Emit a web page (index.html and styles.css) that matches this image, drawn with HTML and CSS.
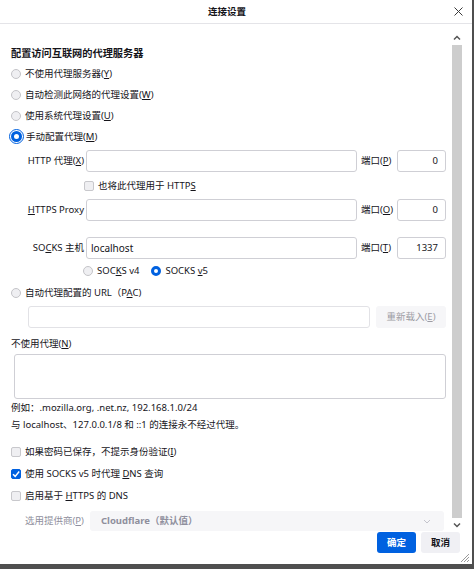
FILE: index.html
```html
<!DOCTYPE html>
<html lang="zh-CN">
<head>
<meta charset="utf-8">
<title>连接设置</title>
<link rel="stylesheet" href="styles.css">
</head>
<body>
<div class="window">
  <div class="titlebar">
    <span class="title">连接设置</span>
    <svg class="close" width="9" height="9" viewBox="0 0 9 9"><path d="M0.5 0.5L8.5 8.5M8.5 0.5L0.5 8.5" stroke="#3a3a3a" stroke-width="1"/></svg>
  </div>
  <div class="scrollarea">
    <div class="content">
      <div class="heading">配置访问互联网的代理服务器</div>
      <div class="radio-row"><span class="radio"></span><span>不使用代理服务器(<u>Y</u>)</span></div>
      <div class="radio-row"><span class="radio"></span><span>自动检测此网络的代理设置(<u>W</u>)</span></div>
      <div class="radio-row"><span class="radio"></span><span>使用系统代理设置(<u>U</u>)</span></div>
      <div class="radio-row"><span class="radio on focus"></span><span>手动配置代理(<u>M</u>)</span></div>

      <div class="proxy-row first">
        <span class="plabel">HTTP 代理(<u>X</u>)</span>
        <span class="input host"></span>
        <span class="portlabel">端口(<u>P</u>)</span>
        <span class="input port">0</span>
      </div>
      <div class="check-row indent"><span class="check"></span><span>也将此代理用于 HTTP<u>S</u></span></div>
      <div class="proxy-row">
        <span class="plabel"><u>H</u>TTPS Proxy</span>
        <span class="input host"></span>
        <span class="portlabel">端口(<u>O</u>)</span>
        <span class="input port">0</span>
      </div>
      <div class="proxy-row socks">
        <span class="plabel">SO<u>C</u>KS 主机</span>
        <span class="input host val">localhost</span>
        <span class="portlabel">端口(<u>T</u>)</span>
        <span class="input port">1337</span>
      </div>
      <div class="socks-row">
        <span class="radio"></span><span class="sv4">SOC<u>K</u>S v4</span>
        <span class="radio on"></span><span>SOCKS <u>v</u>5</span>
      </div>
      <div class="radio-row pac"><span class="radio"></span><span>自动代理配置的 URL（P<u>A</u>C)</span></div>
      <div class="pac-input-row">
        <span class="input pacurl"></span>
        <span class="btn-reload"><span>重新载入(<u>E</u>)</span></span>
      </div>
      <div class="text-line noproxy"><span>不使用代理(<u>N</u>)</span></div>
      <div class="textarea"></div>
      <div class="text-line ex">例如：.mozilla.org, .net.nz, 192.168.1.0/24</div>
      <div class="text-line ex">与 localhost、127.0.0.1/8 和 ::1 的连接永不经过代理。</div>
      <div class="check-row first-check"><span class="check"></span><span>如果密码已保存，不提示身份验证(<u>I</u>)</span></div>
      <div class="check-row"><span class="check on"><svg width="10" height="10" viewBox="0 0 10 10"><path d="M2 5.2L4.2 7.4L8.2 2.6" fill="none" stroke="#fff" stroke-width="1.5"/></svg></span><span>使用 SOCKS v5 时代理 <u>D</u>NS 查询</span></div>
      <div class="check-row"><span class="check"></span><span>启用基于 <u>H</u>TTPS 的 DNS</span></div>
      <div class="provider-row">
        <span class="plabel2">选用提供商(<u>P</u>)</span>
        <span class="select"><span>Cloudflare（默认值）</span><svg class="chev" width="8" height="5" viewBox="0 0 8 5"><path d="M1 1L4 4L7 1" fill="none" stroke="#c4c4cc" stroke-width="1"/></svg></span>
      </div>
    </div>
    <div class="scrollbar">
      <svg class="arrow" width="10" height="12" viewBox="0 0 10 12"><path d="M2 7.5L5 4.5L8 7.5" fill="none" stroke="#555" stroke-width="1.5"/></svg>
      <div class="thumb"></div>
      <svg class="arrow" width="10" height="12" viewBox="0 0 10 12"><path d="M2 4.5L5 7.5L8 4.5" fill="none" stroke="#555" stroke-width="1.5"/></svg>
    </div>
    <div class="gutter"></div>
  </div>
  <div class="footer">
    <span class="btn primary">确定</span>
    <span class="btn">取消</span>
    <svg class="grip" width="10" height="10" viewBox="0 0 10 10"><path d="M9 1L1 9M9 4L4 9M9 7L7 9" stroke="#9a9a9a" stroke-width="1"/></svg>
  </div>
</div>
</body>
</html>
```

FILE: styles.css
```css
* { box-sizing: border-box; }
body {
  margin: 0;
  background: #fff;
  font-family: "Noto Sans", "Noto Sans CJK SC", sans-serif;
  font-size: 9.5px;
  line-height: 1.2;
  color: #15141a;
}
u { text-decoration: underline; text-underline-offset: 1px; }

.window {
  width: 474px;
  height: 569px;
  display: flex;
  flex-direction: column;
  background: #fff;
  border-right: 2px solid #4f4f4f;
  border-bottom: 5px solid #4f4f4f;
}

.titlebar {
  height: 24px;
  flex: none;
  border-bottom: 1px solid #e4e4e8;
  display: flex;
  align-items: center;
  justify-content: center;
  padding-right: 18px;
  position: relative;
}
.title { font-weight: 700; font-size: 9.5px; }
.close { position: absolute; right: 9px; top: 7px; }

.scrollarea {
  height: 507px;
  flex: none;
  display: flex;
}
.content {
  width: 452px;
  flex: none;
  padding: 19px 6px 0 11px;
  overflow: hidden;
}
.scrollbar {
  width: 10px;
  flex: none;
  display: flex;
  flex-direction: column;
  padding-top: 8px;
}
.arrow { flex: none; display: block; }
.thumb { flex: 1; background: #cdcdcd; margin: 1px 0; }
.gutter { width: 10px; flex: none; }

.heading { height: 20px; display: flex; align-items: center; font-size: 10.2px; font-weight: 700; white-space: nowrap; }

.radio-row { height: 21px; display: flex; align-items: center; gap: 4px; white-space: nowrap; }
.radio {
  width: 10px; height: 10px; flex: none;
  border-radius: 50%;
  border: 1px solid #c4c4c8;
  background: #efeff2;
}
.radio.on { border: 3px solid #0061e0; background: #fff; }
.radio.focus { outline: 1px solid #0061e0; outline-offset: 1px; width: 11px; height: 11px; }

.proxy-row { height: 26px; display: flex; align-items: center; white-space: nowrap; }
.proxy-row.first { height: 28px; }
.proxy-row.socks { margin-top: 12px; }
.plabel { width: 75px; text-align: right; padding-right: 2px; flex: none; }
.input {
  height: 22px;
  border: 1px solid #cfcfd5;
  border-radius: 3px;
  background: #fff;
  display: flex;
  align-items: center;
  flex: none;
}
.host { width: 271px; }
.host.val { padding-left: 4px; font-size: 10px; }
.portlabel { width: 33px; margin: 0 3px 0 4px; flex: none; }
.port { width: 49px; justify-content: flex-end; padding-right: 7px; }

.check-row { height: 22px; display: flex; align-items: center; gap: 4px; white-space: nowrap; }
.check-row.indent { padding-left: 73px; }
.check {
  width: 10px; height: 10px; flex: none;
  border: 1px solid #c8c8cc;
  border-radius: 2px;
  background: #efeff2;
  display: flex; align-items: center; justify-content: center;
}
.check.on { background: #0061e0; border-color: #0061e0; }
.check svg { display: block; flex: none; }

.socks-row { height: 20px; display: flex; align-items: center; padding-left: 72px; gap: 4px; white-space: nowrap; }
.sv4 { margin-right: 8px; }

.radio-row.pac { height: 20px; margin-top: 2px; }
.pac-input-row { display: flex; margin-top: 3px; padding-left: 17px; gap: 6px; }
.pacurl { width: 342px; border-color: #e2e2e6; }
.btn-reload {
  width: 70px; height: 22px;
  background: #f6f6f8;
  border-radius: 3px;
  color: #9c9ca4;
  display: flex; align-items: center; justify-content: center;
  white-space: nowrap;
}

.text-line { height: 16px; display: flex; align-items: center; white-space: nowrap; }
.noproxy { margin-top: 8px; }
.textarea {
  margin: 2px 0 0 3px;
  width: 432px; height: 45px;
  border: 1px solid #cfcfd5;
  border-radius: 3px;
}
.ex { margin-top: 1px; }
.first-check { margin-top: 8px; }

.provider-row { height: 20px; margin-top: 4px; display: flex; align-items: center; padding-left: 14px; white-space: nowrap; }
.plabel2 { width: 65px; color: #8f8f9d; flex: none; }
.select {
  width: 354px; height: 20px;
  background: #f6f6f8;
  border-radius: 3px;
  color: #8f8f9d;
  font-weight: 700;
  display: flex; align-items: center;
  padding-left: 11px;
  position: relative;
}
.chev { position: absolute; right: 13px; top: 8px; }

.footer {
  flex: 1;
  display: flex;
  justify-content: flex-end;
  align-items: flex-start;
  gap: 5px;
  padding: 1px 12px 0 0;
  position: relative;
}
.btn {
  width: 39px; height: 21px;
  border-radius: 3px;
  background: #f0f0f4;
  font-weight: 700;
  display: flex; align-items: center; justify-content: center;
}
.btn.primary { background: #0061e0; color: #fff; }
.grip { position: absolute; right: 2px; bottom: 1px; }
```
